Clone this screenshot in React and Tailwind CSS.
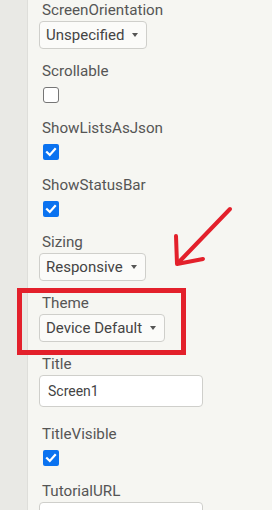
import React from "react";

function Label({ children }) {
  return (
    <div className="h-[20px] leading-[20px] text-[15.2px] text-[#555] ml-[3px]">{children}</div>
  );
}

function Caret() {
  return (
    <svg width="6" height="4" viewBox="0 0 6 4" className="ml-[8px]">
      <path d="M0 0 L6 0 L3 4 Z" fill="#555" />
    </svg>
  );
}

function Dropdown({ label, value }) {
  return (
    <div className="mb-[12px]">
      <Label>{label}</Label>
      <div className="mt-[1px] h-[28px] inline-flex items-center pl-[6px] pr-[8px] border border-[#cfcfcb] rounded-[4px] bg-[#fbfbf9] text-[15px] text-[#444]">
        <span>{value}</span>
        <Caret />
      </div>
    </div>
  );
}

function Check({ label, checked }) {
  return (
    <div className="mb-[15px]">
      <Label>{label}</Label>
      <div className="mt-[6px] ml-[4px]">
        {checked ? (
          <div className="w-[16px] h-[16px] rounded-[2px] bg-[#0a72f0] flex items-center justify-center">
            <svg width="12" height="12" viewBox="0 0 12 12">
              <path d="M2 6.2 L4.8 9 L10 3" stroke="white" strokeWidth="2.2" fill="none" strokeLinecap="square" />
            </svg>
          </div>
        ) : (
          <div className="w-[16px] h-[16px] rounded-[3px] bg-white border border-[#767676]" />
        )}
      </div>
    </div>
  );
}

function TextBox({ label, value }) {
  return (
    <div className="mb-[17px]">
      <Label>{label}</Label>
      <div className="mt-[1px] w-[164px] h-[32px] flex items-center pl-[8px] border border-[#cfcfcb] rounded-[4px] bg-white text-[14px] text-[#444]">
        {value}
      </div>
    </div>
  );
}

export default function App() {
  return (
    <div
      className="relative w-[272px] h-[510px] overflow-hidden flex bg-[#f6f6f2]"
      style={{ fontFamily: "Roboto, 'Liberation Sans', sans-serif" }}
    >
      <div className="w-[28px] shrink-0 bg-[#e9e9e5] border-r border-[#dededa]" />
      <div className="flex-1 pl-[11px] flex flex-col">
        <Dropdown label="ScreenOrientation" value="Unspecified" />
        <Check label="Scrollable" checked={false} />
        <Check label="ShowListsAsJson" checked />
        <Check label="ShowStatusBar" checked />
        <Dropdown label="Sizing" value="Responsive" />
        <Dropdown label="Theme" value="Device Default" />
        <TextBox label="Title" value="Screen1" />
        <Check label="TitleVisible" checked />
        <TextBox label="TutorialURL" value="" />
      </div>

      <div className="absolute left-[17px] top-[288px] w-[169px] h-[67px] border-[5px] border-[#e3202b]" />

      <svg className="absolute left-0 top-0" width="272" height="510" viewBox="0 0 272 510">
        <g stroke="#e3202b" strokeWidth="4" strokeLinecap="round" fill="none">
          <path d="M230 209 L178 263" />
          <path d="M176 236 L177 264 L203 259" strokeLinejoin="round" />
        </g>
      </svg>
    </div>
  );
}
